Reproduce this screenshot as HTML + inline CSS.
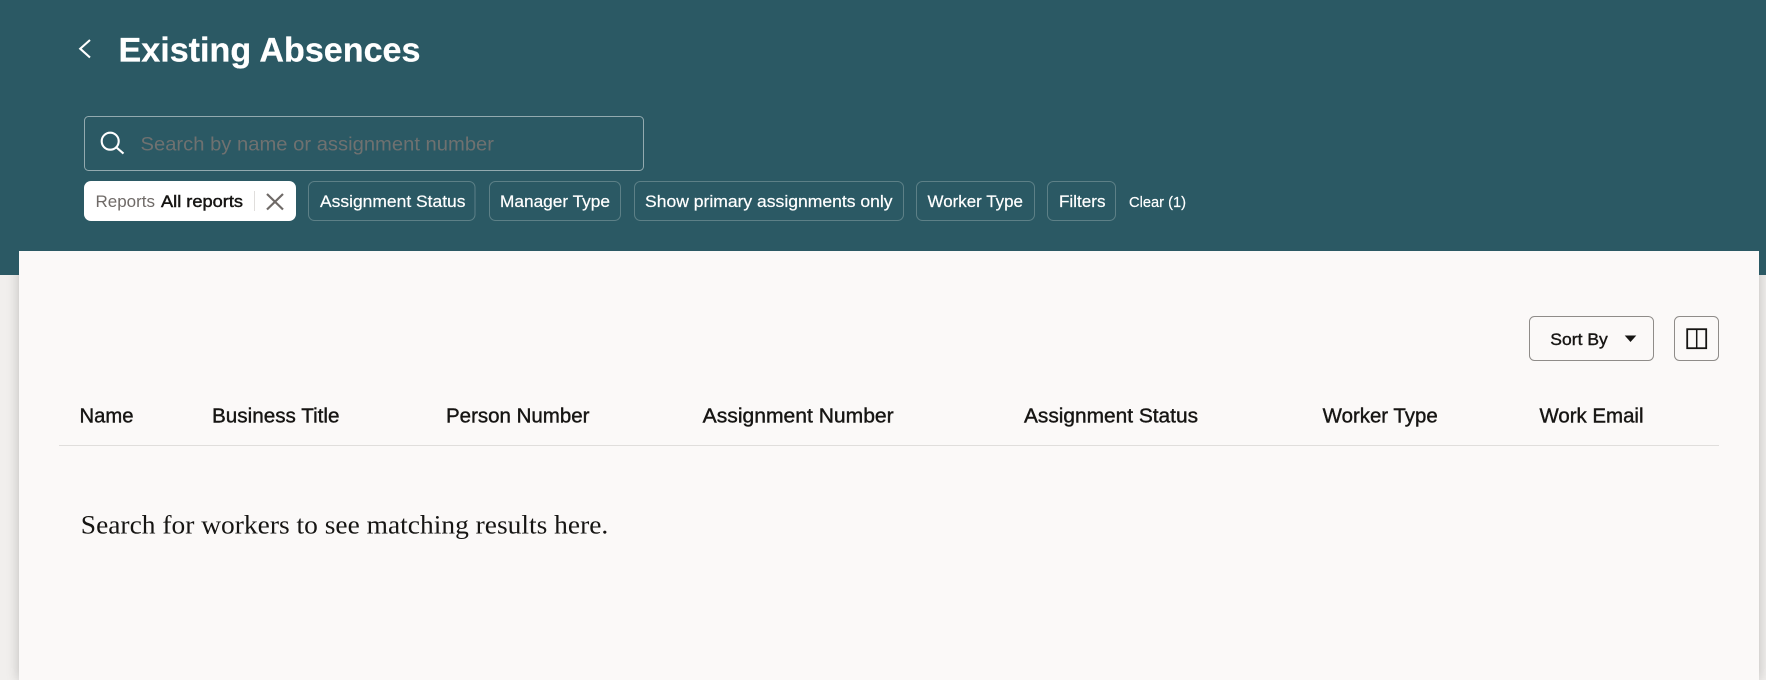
<!DOCTYPE html>
<html lang="en">
<head>
<meta charset="utf-8">
<title>Existing Absences</title>
<style>
html,body{margin:0;padding:0;width:1766px;height:680px;overflow:hidden;background:#f1efed}
#wrap{position:absolute;left:0;top:0;width:1766px;height:680px;overflow:hidden;background:#f1efed}
.abs{position:absolute}
#shadow{left:19px;top:251px;width:1740px;height:429px;box-shadow:0 12px 12px rgba(0,0,0,0),0 0 12px rgba(0,0,0,.22);z-index:1}
#header{left:0;top:0;width:1766px;height:275px;background:#2b5964;z-index:2}
#panel{left:19px;top:251px;width:1740px;height:429px;background:#fbf9f8;z-index:3}
svg{position:absolute;left:0;top:0;z-index:4;display:block}
text{font-family:"Liberation Sans",sans-serif}
.chip{fill:none;stroke:#5d8087;stroke-width:1}
.ct{font-size:16.5px;fill:#fff;stroke:#fff;stroke-width:.2}
.th{font-size:20px;fill:#161513;stroke:#161513;stroke-width:.4}
</style>
</head>
<body>
<div id="wrap">
<div id="shadow" class="abs"></div>
<div id="header" class="abs"></div>
<div id="panel" class="abs"></div>
<svg width="1766" height="680" viewBox="0 0 1766 680" xmlns="http://www.w3.org/2000/svg">
  <path d="M90 40 L80.2 48.7 L90 57.5" fill="none" stroke="#fff" stroke-width="2.1"/>
  <text x="118.5" y="61.5" font-size="34" font-weight="700" fill="#fff" stroke="#fff" stroke-width=".25" textLength="302" lengthAdjust="spacingAndGlyphs">Existing Absences</text>

  <rect x="84.5" y="116.5" width="559" height="54" rx="4" fill="none" stroke="#93aaaf" stroke-width="1"/>
  <circle cx="110.2" cy="141.2" r="8.5" fill="none" stroke="#fff" stroke-width="2.1"/>
  <path d="M116.3 147.3 L123.5 153.6" fill="none" stroke="#fff" stroke-width="2.1"/>
  <text x="140.5" y="150.7" font-size="19.5" fill="#6f7170" textLength="353.5" lengthAdjust="spacingAndGlyphs">Search by name or assignment number</text>

  <rect x="84" y="181" width="212" height="40" rx="7" fill="#fff"/>
  <text x="95.5" y="207" font-size="16.5" fill="#6f6a67" textLength="59.5" lengthAdjust="spacingAndGlyphs">Reports</text>
  <text x="161" y="207" font-size="16.5" fill="#161513" stroke="#161513" stroke-width=".45" textLength="82" lengthAdjust="spacingAndGlyphs">All reports</text>
  <path d="M254.5 191 V211" stroke="#e0dedc" stroke-width="1"/>
  <path d="M267 194 L283 209.5 M283 194 L267 209.5" fill="none" stroke="#6f6a67" stroke-width="2.2"/>

  <rect class="chip" x="308.5" y="181.5" width="166.5" height="39" rx="6"/>
  <text class="ct" x="320" y="207" textLength="145.5" lengthAdjust="spacingAndGlyphs">Assignment Status</text>
  <rect class="chip" x="489.5" y="181.5" width="131" height="39" rx="6"/>
  <text class="ct" x="500" y="207" textLength="110" lengthAdjust="spacingAndGlyphs">Manager Type</text>
  <rect class="chip" x="634.5" y="181.5" width="269" height="39" rx="6"/>
  <text class="ct" x="645" y="207" textLength="247.5" lengthAdjust="spacingAndGlyphs">Show primary assignments only</text>
  <rect class="chip" x="916.5" y="181.5" width="118" height="39" rx="6"/>
  <text class="ct" x="927.5" y="207" textLength="95.5" lengthAdjust="spacingAndGlyphs">Worker Type</text>
  <rect class="chip" x="1047.5" y="181.5" width="68" height="39" rx="6"/>
  <text class="ct" x="1059" y="207" textLength="46.5" lengthAdjust="spacingAndGlyphs">Filters</text>
  <text x="1129" y="207" font-size="14.5" fill="#fff" stroke="#fff" stroke-width=".2" textLength="57" lengthAdjust="spacingAndGlyphs">Clear (1)</text>

  <rect x="1529.5" y="316.5" width="124" height="44" rx="5" fill="none" stroke="#8f8c89" stroke-width="1"/>
  <text x="1550.3" y="345" font-size="17" fill="#161513" stroke="#161513" stroke-width=".4" textLength="57.5" lengthAdjust="spacingAndGlyphs">Sort By</text>
  <path d="M1624.7 335.5 H1636.3 L1630.5 342 Z" fill="#161513"/>
  <rect x="1674.5" y="316.5" width="44" height="44" rx="5" fill="none" stroke="#8f8c89" stroke-width="1"/>
  <rect x="1687.2" y="329.2" width="19" height="19" fill="none" stroke="#161513" stroke-width="1.8"/>
  <path d="M1696.7 329 V348" stroke="#161513" stroke-width="1.5"/>

  <text class="th" x="79.5" y="422.7" textLength="54" lengthAdjust="spacingAndGlyphs">Name</text>
  <text class="th" x="212" y="422.7" textLength="127.5" lengthAdjust="spacingAndGlyphs">Business Title</text>
  <text class="th" x="446" y="422.7" textLength="143.5" lengthAdjust="spacingAndGlyphs">Person Number</text>
  <text class="th" x="702.7" y="422.7" textLength="191" lengthAdjust="spacingAndGlyphs">Assignment Number</text>
  <text class="th" x="1024" y="422.7" textLength="174" lengthAdjust="spacingAndGlyphs">Assignment Status</text>
  <text class="th" x="1322.7" y="422.7" textLength="115" lengthAdjust="spacingAndGlyphs">Worker Type</text>
  <text class="th" x="1539.5" y="422.7" textLength="104" lengthAdjust="spacingAndGlyphs">Work Email</text>
  <rect x="59" y="445" width="1660" height="1" fill="#e0dedc"/>

  <text x="80.8" y="533.3" font-size="26" fill="#161513" style="font-family:'Liberation Serif',serif" textLength="527.5" lengthAdjust="spacingAndGlyphs">Search for workers to see matching results here.</text>
</svg>
</div>
</body>
</html>
